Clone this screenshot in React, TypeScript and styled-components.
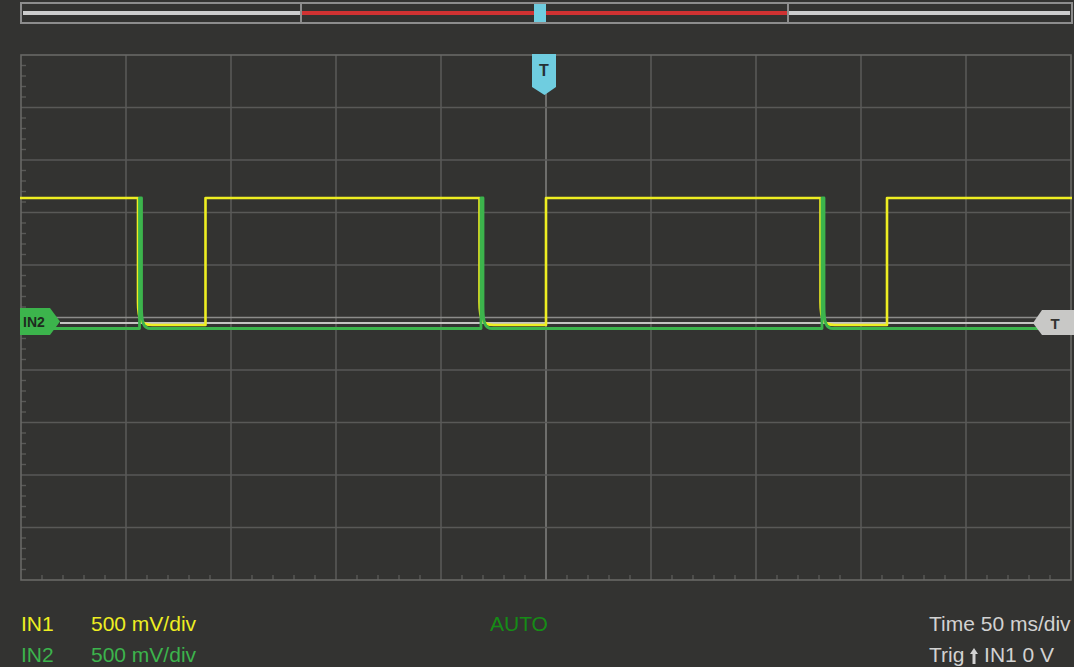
import React from "react";
import styled, { createGlobalStyle } from "styled-components";

const GlobalStyle = createGlobalStyle`
  html, body { margin: 0; padding: 0; background: #333331; overflow: hidden; }
  body { font-family: "Liberation Sans", Arial, sans-serif; }
`;

const Page = styled.div`
  width: 1074px;
  display: flex;
  flex-direction: column;
  & > * { flex-shrink: 0; }
`;

const TimelineBar = styled.div`
  margin: 2px 0 0 20px;
  width: 1053px;
  height: 22px;
  box-sizing: border-box;
  border: 2px solid #8d8d8d;
  padding: 0 1px;
  display: flex;
`;

const Segment = styled.div<{ $w: number }>`
  position: relative;
  width: ${(p) => p.$w}px;
  display: flex;
  align-items: center;
`;

const Track = styled.div<{ $active?: boolean }>`
  flex: 1;
  height: 4px;
  background: ${(p) => (p.$active ? "#d03232" : "#cdcdcd")};
`;

const Divider = styled.div`
  width: 2px;
  background: #8d8d8d;
`;

const ViewMarker = styled.div`
  position: absolute;
  top: 0;
  bottom: 0;
  left: 232px;
  width: 12px;
  background: #6fcde0;
`;

const Plot = styled.svg`
  display: block;
  margin-top: 20px;
  overflow: visible;
`;

const MarkerText = styled.text<{ $size: number }>`
  font-family: "Liberation Sans", Arial, sans-serif;
  font-weight: bold;
  font-size: ${(p) => p.$size}px;
`;

const Info = styled.div`
  display: grid;
  grid-template-columns: 70px 399px 439px 1fr;
  grid-auto-rows: 31px;
  padding: 8px 0 0 21px;
  font-size: 21px;
  line-height: 31px;
  white-space: nowrap;
`;

const Label = styled.span<{ $color: string }>`
  color: ${(p) => p.$color};
`;

const UpArrow = styled.svg`
  display: inline-block;
  vertical-align: -2px;
`;

const YELLOW = "#eeee22";
const GREEN = "#3cb44c";
const GRID = "#595957";
const FRAME = "#686866";

const X0 = 21;
const Y0 = 55;
const DX = 105;
const DY = 52.5;

const falls = [138, 479.5, 820.5];
const rises = [205.5, 546, 887];

function yellowPath() {
  let d = "M20 198";
  falls.forEach((f, i) => {
    d += ` H${f} V302 C${f} 320 ${f + 3} 325 ${f + 14} 325 H${rises[i]} V198`;
  });
  return d + " H1072";
}

function greenPath() {
  let d = "M21 328.5";
  falls.forEach((f) => {
    const g = f + 1.5;
    d += ` H${g} V198 H${g + 2} V306 C${g + 2} 323 ${g + 4} 328.5 ${g + 11} 328.5`;
  });
  return d + " H1072";
}

function Scope() {
  const vLines = Array.from({ length: 9 }, (_, i) => X0 + DX * (i + 1));
  const hLines = Array.from({ length: 9 }, (_, i) => Y0 + DY * (i + 1));
  const ticks = Array.from({ length: 50 }, (_, j) => j).filter((j) => j % 5 !== 0);
  return (
    <Plot width={1074} height={556} viewBox="0 44 1074 556">
      {vLines.map((x, i) => (
        <line key={"v" + i} x1={x} y1={Y0} x2={x} y2={580} stroke={i === 4 ? "#7e7e7c" : GRID} strokeWidth={1.6} />
      ))}
      {hLines.map((y, i) => (
        <line key={"h" + i} x1={X0} y1={y} x2={1071} y2={y} stroke={i === 4 ? "#8c8c8a" : GRID} strokeWidth={1.6} />
      ))}
      {ticks.map((j) => (
        <line key={"lt" + j} x1={X0} y1={Y0 + j * 10.5} x2={X0 + 5} y2={Y0 + j * 10.5} stroke={GRID} strokeWidth={1.4} />
      ))}
      {ticks.map((j) => (
        <line key={"bt" + j} x1={X0 + j * 21} y1={575} x2={X0 + j * 21} y2={580} stroke={GRID} strokeWidth={1.4} />
      ))}
      <rect x={X0} y={Y0} width={1050} height={525} fill="none" stroke={FRAME} strokeWidth={1.6} />
      <line x1={60} y1={323} x2={1035} y2={323} stroke="#c4c4c2" strokeWidth={2} />
      <path d={yellowPath()} fill="none" stroke={YELLOW} strokeWidth={2.6} strokeLinejoin="round" />
      <path d={greenPath()} fill="none" stroke={GREEN} strokeWidth={2.8} strokeLinejoin="round" />

      <polygon points="532,54 556,54 556,87 544.5,95 532,87" fill="#6fcde0" />
      <MarkerText $size={16} x={544} y={76} textAnchor="middle" fill="#263035">T</MarkerText>

      <polygon points="20,308 50,308 60,321.5 50,335 20,335" fill={GREEN} />
      <MarkerText $size={14} x={23} y={327} fill="#1e2b1e">IN2</MarkerText>

      <polygon points="1033,323 1042,310 1074,310 1074,335 1042,335" fill="#c8c8c6" />
      <MarkerText $size={15} x={1055} y={329} textAnchor="middle" fill="#333331">T</MarkerText>
    </Plot>
  );
}

export default function App() {
  return (
    <>
      <GlobalStyle />
      <Page>
        <TimelineBar>
          <Segment $w={277}>
            <Track />
          </Segment>
          <Divider />
          <Segment $w={485}>
            <Track $active />
            <ViewMarker />
          </Segment>
          <Divider />
          <Segment $w={281}>
            <Track />
          </Segment>
        </TimelineBar>
        <Scope />
        <Info>
          <Label $color={YELLOW}>IN1</Label>
          <Label $color={YELLOW}>500 mV/div</Label>
          <Label $color="#168c16">AUTO</Label>
          <Label $color="#d2d2d2">Time 50 ms/div</Label>
          <Label $color={GREEN}>IN2</Label>
          <Label $color={GREEN}>500 mV/div</Label>
          <span />
          <Label $color="#d2d2d2">
            Trig{" "}
            <UpArrow width={8} height={16} viewBox="0 0 8 16">
              <path d="M4 0 L8 6 H5.5 V16 H2.5 V6 H0 Z" fill="#d2d2d2" />
            </UpArrow>{" "}
            IN1 0 V
          </Label>
        </Info>
      </Page>
    </>
  );
}
